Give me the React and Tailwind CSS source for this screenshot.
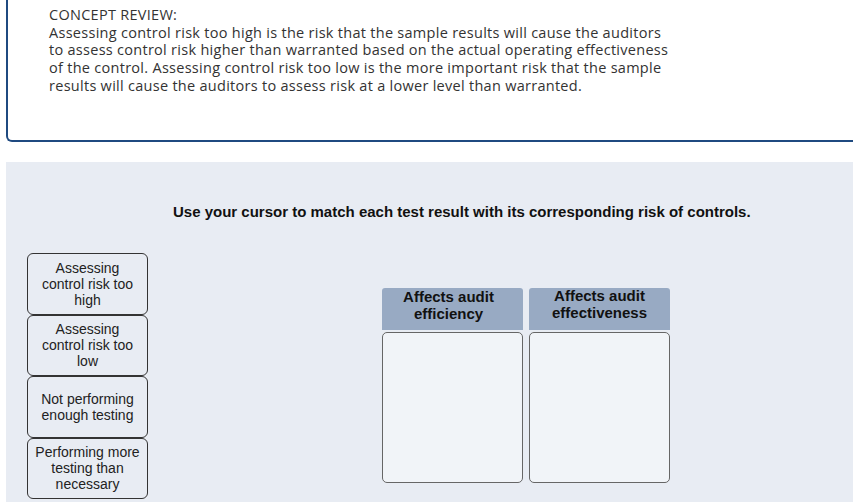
import React from "react";

const lines = [
  "Assessing control risk too high is the risk that the sample results will cause the auditors",
  "to assess control risk higher than warranted based on the actual operating effectiveness",
  "of the control. Assessing control risk too low is the more important risk that the sample",
  "results will cause the auditors to assess risk at a lower level than warranted.",
];

const cards = [
  ["Assessing", "control risk too", "high"],
  ["Assessing", "control risk too", "low"],
  ["Not performing", "enough testing"],
  ["Performing more", "testing than", "necessary"],
];

export default function App() {
  return (
    <div className="w-[853px] h-[502px] overflow-hidden bg-white">
      <div className="ml-[6px] w-[900px] h-[142px] border-l-2 border-b-2 border-[#1f4a80] rounded-bl-[6px] pl-[41px] pt-[6px] text-[#333] text-[14.5px] leading-[17.7px]" style={{ fontFamily: '"Open Sans", sans-serif' }}>
        <div className="whitespace-nowrap tracking-[0.28px]">CONCEPT REVIEW:</div>
        {lines.map((l, i) => (
          <div key={i} className="whitespace-nowrap tracking-[0.28px]">{l}</div>
        ))}
      </div>
      <div className="ml-[6px] mt-[20px] h-[400px] bg-[#e8ecf3]" style={{ fontFamily: '"Liberation Sans", Arial, sans-serif' }}>
        <div className="pt-[41px] pl-[167px] text-[15px] font-bold text-[#111] whitespace-nowrap leading-[18px]">
          Use your cursor to match each test result with its corresponding risk of controls.
        </div>
        <div className="flex mt-[32px]">
          <div className="ml-[21px] flex flex-col w-[121px]">
            {cards.map((c, i) => (
              <div key={i} className="h-[61.5px] border border-[#333] rounded-[6px] flex flex-col items-center justify-center text-center text-[14px] leading-[16px] text-[#222]">
                {c.map((t, j) => (
                  <div key={j} className="whitespace-nowrap">{t}</div>
                ))}
              </div>
            ))}
          </div>
          <div className="ml-[234px] mt-[35px] flex gap-[6px]">
            {[["Affects audit", "efficiency", "pr-[8px]"], ["Affects audit", "effectiveness", "-mt-px"]].map((h, i) => (
              <div key={i} className="flex flex-col w-[141px]">
                <div className="h-[42px] bg-[#98aac3] rounded-t-[3px] text-center text-[15px] font-bold leading-[17px] text-[#111]">
                  <div className={h[2]}>
                    <div>{h[0]}</div>
                    <div>{h[1]}</div>
                  </div>
                </div>
                <div className="mt-[2px] h-[151px] bg-[#f1f4f8] border border-[#666] rounded-[5px]"></div>
              </div>
            ))}
          </div>
        </div>
      </div>
    </div>
  );
}
